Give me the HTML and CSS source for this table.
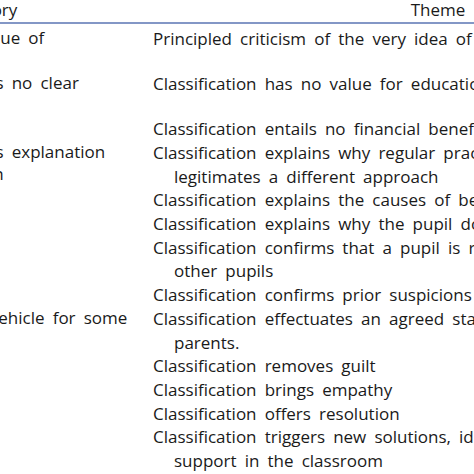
FILE: index.html
```html
<!DOCTYPE html>
<html lang="en">
<head>
<meta charset="utf-8">
<title>Categories and themes</title>
<link rel="stylesheet" href="styles.css">
</head>
<body>
<div class="table">
  <div class="row head">
    <div class="hcat">Category</div>
    <div class="htheme">Theme</div>
  </div>
  <div class="row">
    <div class="cat"><span>Doubts about the value of</span><span>classification</span></div>
    <div class="themes">
      <div class="theme"><span>Principled criticism of the very idea of classification</span></div>
    </div>
  </div>
  <div class="row">
    <div class="cat"><span>Classification provides no clear</span><span>value</span></div>
    <div class="themes">
      <div class="theme"><span>Classification has no value for education</span></div>
    </div>
  </div>
  <div class="row">
    <div class="cat"><span>No financial gain</span></div>
    <div class="themes">
      <div class="theme"><span>Classification entails no financial benefit</span></div>
    </div>
  </div>
  <div class="row">
    <div class="cat"><span>Classification provides explanation</span><span>and gives legitimation</span></div>
    <div class="themes">
      <div class="theme"><span>Classification explains why regular practice fails and</span><span class="cont">legitimates a different approach</span></div>
      <div class="theme"><span>Classification explains the causes of behaviour</span></div>
      <div class="theme"><span>Classification explains why the pupil does not learn</span></div>
      <div class="theme"><span>Classification confirms that a pupil is rightly different from</span><span class="cont">other pupils</span></div>
      <div class="theme"><span>Classification confirms prior suspicions</span></div>
    </div>
  </div>
  <div class="row">
    <div class="cat"><span>Classification is the vehicle for some</span><span>purposes</span></div>
    <div class="themes">
      <div class="theme"><span>Classification effectuates an agreed standpoint with the</span><span class="cont">parents.</span></div>
      <div class="theme"><span>Classification removes guilt</span></div>
      <div class="theme"><span>Classification brings empathy</span></div>
      <div class="theme"><span>Classification offers resolution</span></div>
      <div class="theme"><span>Classification triggers new solutions, ideas and</span><span class="cont">support in the classroom</span></div>
    </div>
  </div>
</div>
</body>
</html>
```

FILE: styles.css
```css
html, body {
  margin: 0;
  padding: 0;
  background: #ffffff;
}

body {
  width: 474px;
  height: 474px;
  overflow: hidden;
  font-family: "Open Sans", "Noto Sans", sans-serif;
  font-size: 17px;
  word-spacing: 3.7px;
  color: #1a1a1a;
}

.table {
  margin-left: -176.5px;
  margin-top: -2px;
  width: 920px;
}

.row {
  display: grid;
  grid-template-columns: 317px 570px;
  column-gap: 12.5px;
}

.head {
  line-height: 23.7px;
  border-bottom: 2px solid #8397c6;
  margin-bottom: 3.5px;
}

.hcat {
  text-align: center;
  white-space: nowrap;
}

.htheme {
  text-align: center;
  white-space: nowrap;
}

.cat {
  line-height: 22.5px;
}

.cat span,
.theme span {
  display: block;
  white-space: nowrap;
}

.themes {
  line-height: 23.7px;
}

.theme .cont {
  padding-left: 21px;
}
```
